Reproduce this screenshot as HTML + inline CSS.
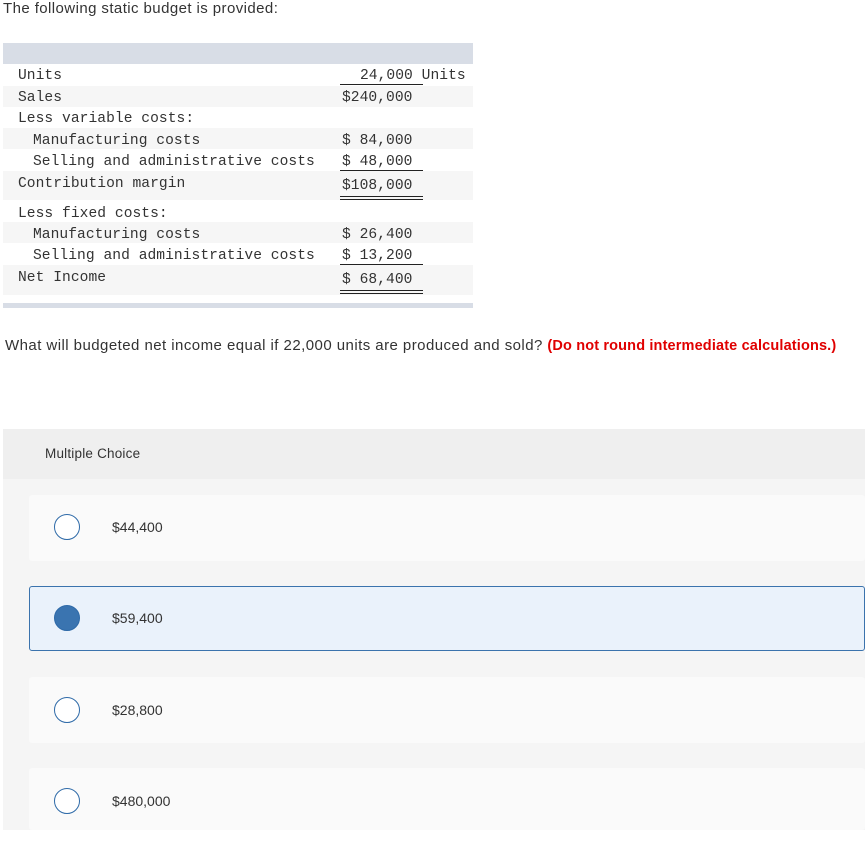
<!DOCTYPE html>
<html><head><style>
body{margin:0;background:#fff;font-family:"Liberation Sans",sans-serif;color:#333;width:865px;height:842px;position:relative;overflow:hidden}
.a{position:absolute}
.m{font-family:"Liberation Mono",monospace;font-size:14.6px;color:#333;white-space:pre;line-height:18px;letter-spacing:0.05px}
.row{position:absolute;left:3px;width:470px;background:#f6f6f6}
.ul{position:absolute;border-top:1px solid #222}
.radio{position:absolute;left:54px;width:26px;height:26px;border:1.5px solid #2e6aa8;border-radius:50%;background:#fff;box-sizing:border-box}
.opt{position:absolute;left:29px;width:836px;background:#fafafa;border-radius:3px}
.ot{position:absolute;left:112px;font-size:14px;color:#333}
</style></head><body>
<div class="a" style="left:3px;top:0px;font-size:15px;letter-spacing:0.42px">The following static budget is provided:</div>
<div class="a" style="left:3px;top:43px;width:470px;height:21px;background:#d8dde6"></div>
<div class="row" style="top:86px;height:21px"></div>
<div class="row" style="top:128px;height:21px"></div>
<div class="row" style="top:171px;height:29px"></div>
<div class="row" style="top:222px;height:21px"></div>
<div class="row" style="top:265px;height:30px"></div>
<div class="a" style="left:3px;top:303px;width:470px;height:5px;background:#d8dde6"></div>

<div class="a m" style="left:18px;top:67px">Units</div>
<div class="a m" style="left:18px;top:89px">Sales</div>
<div class="a m" style="left:18px;top:110px">Less variable costs:</div>
<div class="a m" style="left:33px;top:132px">Manufacturing costs</div>
<div class="a m" style="left:33px;top:153px">Selling and administrative costs</div>
<div class="a m" style="left:18px;top:175px">Contribution margin</div>
<div class="a m" style="left:18px;top:205px">Less fixed costs:</div>
<div class="a m" style="left:33px;top:226px">Manufacturing costs</div>
<div class="a m" style="left:33px;top:247px">Selling and administrative costs</div>
<div class="a m" style="left:18px;top:269px">Net Income</div>

<div class="a m" style="left:360px;top:67px">24,000 Units</div>
<div class="ul" style="left:340px;top:84px;width:83px"></div>
<div class="a m" style="left:342px;top:89px">$240,000</div>
<div class="a m" style="left:342px;top:132px">$ 84,000</div>
<div class="a m" style="left:342px;top:153px">$ 48,000</div>
<div class="ul" style="left:340px;top:170px;width:83px"></div>
<div class="a m" style="left:342px;top:177px">$108,000</div>
<div class="ul" style="left:340px;top:196px;width:83px;border-bottom:1px solid #222;height:2px"></div>
<div class="a m" style="left:342px;top:226px">$ 26,400</div>
<div class="a m" style="left:342px;top:247px">$ 13,200</div>
<div class="ul" style="left:340px;top:264px;width:83px"></div>
<div class="a m" style="left:342px;top:271px">$ 68,400</div>
<div class="ul" style="left:340px;top:290px;width:83px;border-bottom:1px solid #222;height:2px"></div>

<div class="a" style="left:5px;top:337px;font-size:15px;letter-spacing:0.45px;white-space:nowrap">What will budgeted net income equal if 22,000 units are produced and sold? <b style="color:#e00000;font-size:14.5px;letter-spacing:0.15px">(Do not round intermediate calculations.)</b></div>

<div class="a" style="left:3px;top:429px;width:862px;height:401px;background:#f5f5f5"></div>
<div class="a" style="left:3px;top:429px;width:862px;height:50px;background:#efefef"></div>
<div class="a" style="left:45px;top:446px;font-size:13.5px;letter-spacing:0.2px;color:#333">Multiple Choice</div>

<div class="opt" style="top:495px;height:66px"></div>
<div class="radio" style="top:514px"></div><div class="ot" style="top:519px">$44,400</div>
<div class="opt" style="top:586px;height:65px;background:#eaf2fb;border:1px solid #3b73ad;box-sizing:border-box"></div>
<div class="radio" style="top:605px;background:#3a74b0;border-color:#2e6aa8"></div><div class="ot" style="top:610px">$59,400</div>
<div class="opt" style="top:677px;height:66px"></div>
<div class="radio" style="top:697px"></div><div class="ot" style="top:702px">$28,800</div>
<div class="opt" style="top:768px;height:62px"></div>
<div class="radio" style="top:788px"></div><div class="ot" style="top:793px">$480,000</div>
</body></html>
